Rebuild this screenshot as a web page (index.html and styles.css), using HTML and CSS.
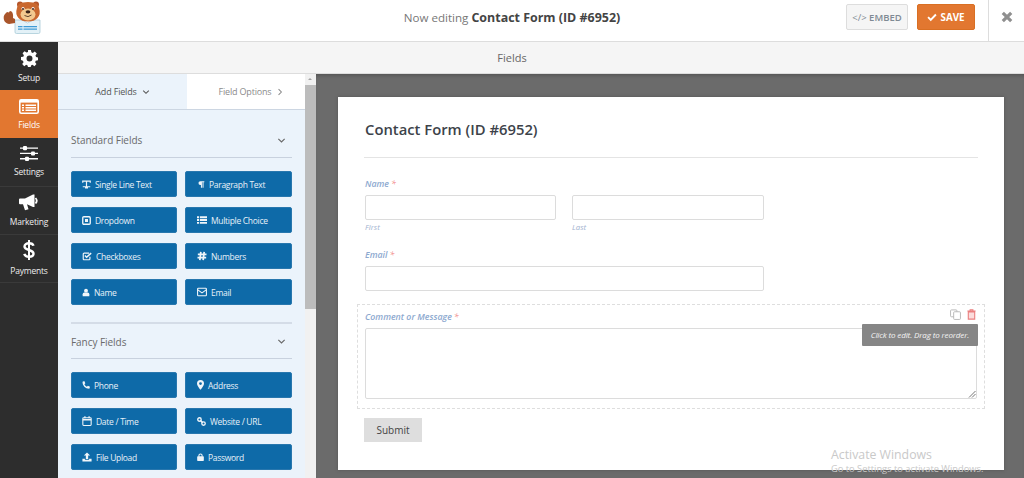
FILE: index.html
```html
<!DOCTYPE html>
<html lang="en">
<head>
<meta charset="utf-8">
<title>Now editing Contact Form</title>
<link rel="stylesheet" href="styles.css">
</head>
<body>
<svg class="defs" width="0" height="0">
  <defs>
    <symbol id="i-text" viewBox="0 0 12 12"><path d="M1 1.500h10M6 1.500v9M4 10.500h4M1 .5v3M11 .5v3M1 9h10" fill="none" stroke="currentColor" stroke-width="1.600"/></symbol>
    <symbol id="i-para" viewBox="0 0 12 12"><path d="M5 1h6v1.600h-1.200V11H8.300V2.600H7.400V11H5.900V6.600H5A2.800 2.800 0 0 1 5 1z" fill="currentColor"/></symbol>
    <symbol id="i-drop" viewBox="0 0 12 12"><rect x="1" y="1" width="10" height="10" rx="1.500" fill="none" stroke="currentColor" stroke-width="1.800"/><rect x="4" y="4" width="4" height="4" fill="currentColor"/></symbol>
    <symbol id="i-list" viewBox="0 0 12 12"><path d="M0 1.500h2.400v2.300H0zM3.400 1.500H12v2.300H3.400zM0 4.900h2.400v2.300H0zM3.400 4.900H12v2.300H3.400zM0 8.300h2.400v2.300H0zM3.400 8.300H12v2.300H3.400z" fill="currentColor"/></symbol>
    <symbol id="i-check" viewBox="0 0 12 12"><path d="M9.500 7v2.500a1 1 0 0 1-1 1h-6a1 1 0 0 1-1-1v-6a1 1 0 0 1 1-1h6" fill="none" stroke="currentColor" stroke-width="1.400"/><path d="M3.500 5.500l2 2L11 2.500" fill="none" stroke="currentColor" stroke-width="1.800"/></symbol>
    <symbol id="i-hash" viewBox="0 0 12 12"><path d="M4.600 1L3.400 11M8.600 1L7.400 11M1 4h10.400M.6 8h10.400" fill="none" stroke="currentColor" stroke-width="2.100"/></symbol>
    <symbol id="i-user" viewBox="0 0 12 12"><circle cx="6" cy="3.200" r="2.900" fill="currentColor"/><path d="M1 11.500V8.500Q1 6 3.500 6h5Q11 6 11 8.500v3z" fill="currentColor"/></symbol>
    <symbol id="i-mail" viewBox="0 0 12 12"><rect x=".7" y="1.500" width="10.600" height="9" rx="1" fill="none" stroke="currentColor" stroke-width="1.300"/><path d="M1 3.500l5 3.600 5-3.600" fill="none" stroke="currentColor" stroke-width="1.300"/></symbol>
    <symbol id="i-phone" viewBox="0 0 12 12"><path d="M3.400 0L.8 1C.6 6.500 5 11.500 11 11.500L12 8.800 8.800 7.300 7.400 8.800C5.800 8 4.200 6.400 3.600 4.900L5 3.500z" fill="currentColor"/></symbol>
    <symbol id="i-pin" viewBox="0 0 10 14"><path fill-rule="evenodd" d="M5 0a5 5 0 0 1 5 5C10 8.300 5 14 5 14S0 8.300 0 5A5 5 0 0 1 5 0zm0 3a2 2 0 1 0 0 4 2 2 0 0 0 0-4z" fill="currentColor"/></symbol>
    <symbol id="i-cal" viewBox="0 0 12 12"><rect x="1" y="2" width="10" height="9.300" rx="1" fill="none" stroke="currentColor" stroke-width="1.300"/><path d="M1 4.500h10" stroke="currentColor" stroke-width="1.800"/><path d="M3.500.2v2.500M8.500.2v2.500" stroke="currentColor" stroke-width="1.500"/></symbol>
    <symbol id="i-link" viewBox="0 0 12 12"><circle cx="3.300" cy="3.300" r="2.300" fill="none" stroke="currentColor" stroke-width="1.800"/><circle cx="8.700" cy="8.700" r="2.300" fill="none" stroke="currentColor" stroke-width="1.800"/><path d="M4.500 4.500l3 3" stroke="currentColor" stroke-width="2"/></symbol>
    <symbol id="i-upload" viewBox="0 0 12 12"><path d="M6 .5L9.800 4.300H7.400v4H4.600v-4H2.200z" fill="currentColor"/><path d="M.5 8h3v1.300h5V8h3v3.500H.5z" fill="currentColor"/></symbol>
    <symbol id="i-lock" viewBox="0 0 10 12"><path d="M2.600 5.500V3.800a2.400 2.400 0 0 1 4.800 0v1.700" fill="none" stroke="currentColor" stroke-width="1.600"/><rect x="0" y="5" width="10" height="7" rx="1" fill="currentColor"/></symbol>
    <symbol id="i-chev" viewBox="0 0 10 10"><path d="M1.500 3.200L5 6.700l3.500-3.500" fill="none" stroke="currentColor" stroke-width="1.300"/></symbol>
  </defs>
</svg>

<header class="topbar">
  <div class="logo">
    <svg viewBox="0 0 42 36" width="42" height="36">
      <path d="M15 20h25v12a1.500 1.500 0 0 1-1.500 1.500h-22A1.500 1.500 0 0 1 15 32z" fill="#e3f1f7" stroke="#a9cbd8" stroke-width=".8"/>
      <path d="M18 26h4.500v1.300H18zM18 28.500h4.500v1.300H18zM23.500 26H37v1.300H23.500zM23.500 28.500H37v1.300H23.500z" fill="#3f9bd6"/>
      <path d="M22 20l5.500 3 5.500-3-5.500-1.500z" fill="#fff" stroke="#a9cbd8" stroke-width=".7"/>
      <circle cx="20" cy="4.500" r="3" fill="#b4552a"/>
      <circle cx="36" cy="4.500" r="3" fill="#b4552a"/>
      <path d="M17 8q0-6 11-6t11 6q2 6-1.500 10-3 3.500-9.500 3.500T18.500 18Q15 14 17 8z" fill="#c9682f"/>
      <ellipse cx="28" cy="14.500" rx="7.500" ry="6" fill="#f3c98e"/>
      <circle cx="23" cy="8.500" r="1.500" fill="#fff"/>
      <circle cx="33" cy="8.500" r="1.500" fill="#fff"/>
      <circle cx="23" cy="9" r="1" fill="#3a2418"/>
      <circle cx="33" cy="9" r="1" fill="#3a2418"/>
      <ellipse cx="28" cy="11.800" rx="2.400" ry="1.600" fill="#3a2418"/>
      <path d="M24.500 15.500q3.500 2.500 7-.5" fill="none" stroke="#3a2418" stroke-width=".8"/>
      <path d="M5 14q-2 2-1 6 1 3 5 4l6-1v-4l-2-1q.5-5-1.500-6.500T9 12.500L7 12z" fill="#a9552b"/>
    </svg>
  </div>
  <h1 class="title">Now editing <strong>Contact Form (ID #6952)</strong></h1>
  <div class="actions">
    <button class="btn-embed"><span class="code">&lt;/&gt;</span> EMBED</button>
    <button class="btn-save">
      <svg viewBox="0 0 12 12" width="10" height="10"><path d="M1.300 6.200l3.200 3.200 6.200-6.400" fill="none" stroke="currentColor" stroke-width="2.300"/></svg>
      SAVE
    </button>
  </div>
  <div class="close">
    <svg viewBox="0 0 12 12" width="12" height="12"><path d="M1.800 1.800l8.400 8.400M10.200 1.800l-8.400 8.400" stroke="currentColor" stroke-width="3.200"/></svg>
  </div>
</header>

<div class="app">
  <nav class="sidenav">
    <a class="nav-item">
      <svg viewBox="0 0 20 20" width="17" height="17"><path fill-rule="evenodd" fill="currentColor" d="M8.300 0h3.400l.5 2.700 1.700.7L16.200 1.800l2.400 2.400-1.600 2.300.7 1.700 2.300.5v3.400l-2.700.5-.7 1.700 1.600 2.300-2.400 2.400-2.300-1.600-1.700.7-.5 2.700H8.300l-.5-2.700-1.700-.7-2.300 1.600-2.400-2.400 1.600-2.300-.7-1.700L0 11.700V8.300l2.700-.5.7-1.700L1.800 3.800l2.400-2.400 2.300 1.600 1.700-.7zM10 6.500a3.500 3.500 0 1 0 0 7 3.500 3.500 0 0 0 0-7z"/></svg>
      <span>Setup</span>
    </a>
    <a class="nav-item active">
      <svg viewBox="0 0 20 15" width="20" height="15"><rect x=".8" y=".8" width="18.400" height="13.400" rx="1.500" fill="none" stroke="currentColor" stroke-width="1.600"/><rect x=".8" y=".8" width="18.400" height="2.800" fill="currentColor"/><path d="M3 5.500h2v1.400H3zM6.500 5.500H17v1.400H6.500zM3 8h2v1.400H3zM6.500 8H17v1.400H6.500zM3 10.500h2v1.400H3zM6.500 10.500H17v1.400H6.500z" fill="currentColor"/></svg>
      <span>Fields</span>
    </a>
    <a class="nav-item">
      <svg viewBox="0 0 18 15" width="18" height="15"><path d="M0 1.500h18v1.300H0zM0 6.800h18v1.300H0zM0 12.100h18v1.300H0z" fill="currentColor"/><rect x="3" y="0" width="4" height="4.200" rx="1" fill="currentColor"/><rect x="11" y="5.400" width="4" height="4.200" rx="1" fill="currentColor"/><rect x="5" y="10.700" width="4" height="4.200" rx="1" fill="currentColor"/></svg>
      <span>Settings</span>
    </a>
    <a class="nav-item">
      <svg viewBox="0 0 20 18" width="20" height="18"><path d="M0 6.500q0-1 1-1h5L14 1.500h1.500V14H14L8 11.300l1.500 5-3.500 1-2-6H1q-1 0-1-1z" fill="currentColor"/><path d="M16.500 5q2.500 2.800 0 5.500" fill="none" stroke="currentColor" stroke-width="1.800"/></svg>
      <span>Marketing</span>
    </a>
    <a class="nav-item">
      <svg viewBox="0 0 12 20" width="12" height="20"><path d="M6 0v20" stroke="currentColor" stroke-width="2"/><path d="M10.500 5.800C10 4 8.500 3.300 6 3.300 3.300 3.300 1.500 4.500 1.500 6.500c0 4.300 9 2.700 9 7 0 2-1.800 3.200-4.500 3.200-2.700 0-4.200-1-4.700-2.800" fill="none" stroke="currentColor" stroke-width="2.400"/></svg>
      <span>Payments</span>
    </a>
  </nav>

  <main class="workspace">
    <div class="section-bar">Fields</div>
    <div class="panes">
      <aside class="panel">
        <div class="tabs">
          <div class="tab tab-add">Add Fields <svg class="chev" width="8" height="8"><use href="#i-chev"/></svg></div>
          <div class="tab tab-options">Field Options <svg class="chev chev-right" width="8" height="8"><use href="#i-chev"/></svg></div>
        </div>
        <div class="groups">
          <section class="group">
            <div class="group-head">Standard Fields <svg class="chev" width="9" height="9"><use href="#i-chev"/></svg></div>
            <div class="field-grid">
              <a class="field-btn"><svg width="9" height="9"><use href="#i-text"/></svg>Single Line Text</a>
              <a class="field-btn"><svg class="w8" width="8" height="9"><use href="#i-para"/></svg>Paragraph Text</a>
              <a class="field-btn"><svg width="9" height="9"><use href="#i-drop"/></svg>Dropdown</a>
              <a class="field-btn"><svg class="w10" width="10" height="10"><use href="#i-list"/></svg>Multiple Choice</a>
              <a class="field-btn"><svg class="w10" width="10" height="10"><use href="#i-check"/></svg>Checkboxes</a>
              <a class="field-btn"><svg class="w10" width="10" height="10"><use href="#i-hash"/></svg>Numbers</a>
              <a class="field-btn"><svg class="w8" width="8" height="9"><use href="#i-user"/></svg>Name</a>
              <a class="field-btn"><svg class="w10" width="10" height="10"><use href="#i-mail"/></svg>Email</a>
            </div>
          </section>
          <section class="group group-fancy">
            <div class="group-head">Fancy Fields <svg class="chev" width="9" height="9"><use href="#i-chev"/></svg></div>
            <div class="field-grid">
              <a class="field-btn"><svg class="w8" width="8" height="8"><use href="#i-phone"/></svg>Phone</a>
              <a class="field-btn"><svg class="w7" width="7" height="10"><use href="#i-pin"/></svg>Address</a>
              <a class="field-btn"><svg class="w10" width="10" height="10"><use href="#i-cal"/></svg>Date / Time</a>
              <a class="field-btn"><svg width="9" height="9"><use href="#i-link"/></svg>Website / URL</a>
              <a class="field-btn"><svg class="w10" width="10" height="10"><use href="#i-upload"/></svg>File Upload</a>
              <a class="field-btn"><svg class="w7" width="7" height="8"><use href="#i-lock"/></svg>Password</a>
            </div>
          </section>
        </div>
      </aside>
      <div class="scrollbar">
        <div class="arrow"></div>
        <div class="thumb"></div>
      </div>
      <section class="canvas">
        <div class="form-card">
          <h2 class="form-title">Contact Form (ID #6952)</h2>
          <div class="row row-name">
            <label class="lbl">Name<em>*</em></label>
            <div class="split">
              <div class="sub"><div class="input"></div><small>First</small></div>
              <div class="sub"><div class="input"></div><small>Last</small></div>
            </div>
          </div>
          <div class="row row-email">
            <label class="lbl">Email<em>*</em></label>
            <div class="input input-md"></div>
          </div>
          <div class="row-active">
            <div class="field-tools">
              <svg viewBox="0 0 12 12" width="11" height="11"><rect x=".6" y="1" width="7" height="7.500" rx="1" fill="none" stroke="#b5b5b5"/><rect x="4" y="3" width="7.400" height="8.400" rx="1" fill="#fff" stroke="#b5b5b5"/></svg>
              <svg viewBox="0 0 12 12" width="11" height="11"><path d="M2.500 3.200h7V11h-7zM1.500 2.200h9M4.500 2V.8h3V2" fill="#fbdcdc" stroke="#ea7f7f" stroke-width="1.200"/></svg>
            </div>
            <label class="lbl">Comment or Message<em>*</em></label>
            <div class="textarea">
              <svg class="grip" viewBox="0 0 8 8" width="8" height="8"><path d="M7.500 1L1 7.500M7.500 4L4 7.500" stroke="#777" stroke-width="1"/></svg>
            </div>
            <div class="tip">Click to edit. Drag to reorder.</div>
          </div>
          <button class="submit">Submit</button>
        </div>
        <div class="watermark">
          <div class="wm-main">Activate Windows</div>
          <div class="wm-sub">Go to Settings to activate Windows.</div>
        </div>
      </section>
    </div>
  </main>
</div>
</body>
</html>
```
FILE: styles.css
```css
* { box-sizing: border-box; }
html, body { margin: 0; height: 478px; overflow: hidden; }
body { font-family: "Open Sans", "Liberation Sans", sans-serif; background: #fff; color: #444; }
.defs { position: absolute; }
button { font-family: inherit; }

.topbar { height: 42px; display: flex; align-items: flex-start; background: #fff; border-bottom: 1px solid #ddd; }
.logo { width: 58px; height: 41px; overflow: hidden; }
.title { margin: 0; flex: 1; padding: 10px 0 0 120px; text-align: center; font-size: 11.600px; line-height: 16px; font-weight: 400; color: #777; }
.title strong { font-size: 12.450px; font-weight: 700; color: #444; }
.actions { display: flex; gap: 9px; padding: 4px 13px 0 0; align-items: center; }
.btn-embed { width: 62px; height: 26px; border: 1px solid #ddd; border-radius: 2px; background: #f5f5f5; color: #7f8a94; font-size: 9.500px; font-weight: 600; padding: 0; }
.btn-embed .code { font-weight: 400; }
.btn-save { width: 58px; height: 26px; border: 1px solid #d96f23; border-radius: 2px; background: #e27730; color: #fff; font-size: 9.800px; font-weight: 700; padding: 0; display: flex; align-items: center; justify-content: center; gap: 3px; }
.close { width: 36px; height: 41px; padding-bottom: 7px; border-left: 1px solid #ddd; color: #8f8f8f; display: flex; align-items: center; justify-content: center; }

.app { display: flex; height: 436px; }
.sidenav { width: 58px; background: #2d2d2d; flex: none; }
.nav-item { height: 48.200px; padding-top: 1px; display: flex; flex-direction: column; align-items: center; justify-content: center; gap: 5px; color: #fff; font-size: 8.500px; letter-spacing: -.2px; border-bottom: 1px solid #3a3a3a; }
.nav-item svg { display: block; }
.nav-item span { line-height: 12px; color: #eee; }
.nav-item:first-child { border-bottom: 0; }
.nav-item.active { background: #e27730; border-bottom: 0; }
.nav-item.active span { color: #fff; }

.workspace { flex: 1; display: flex; flex-direction: column; min-width: 0; }
.section-bar { height: 32px; flex: none; padding-right: 58px; background: #f5f5f5; border-bottom: 1px solid #ddd; text-align: center; font-size: 11px; line-height: 31px; color: #666; }
.panes { flex: 1; display: flex; min-height: 0; }

.panel { width: 247px; flex: none; background: #ebf3fb; overflow: hidden; }
.tabs { display: flex; height: 36px; border-bottom: 1px solid #ccd6e2; font-size: 9px; letter-spacing: -.18px; }
.tab { display: flex; align-items: center; justify-content: center; gap: 5px; }
.tab-add { width: 129px; color: #555; }
.tab-options { width: 118px; background: #fff; color: #8b8b8b; padding-left: 11px; }
.chev { color: currentColor; flex: none; }
.chev-right { transform: rotate(-90deg); }
.groups { padding: 0 13px; }
.group-head { height: 48px; display: flex; align-items: center; justify-content: space-between; padding: 24px 6px 11px 0; font-size: 10px; letter-spacing: -.05px; color: #6a6a6a; border-bottom: 1px solid #c8d1de; }
.field-grid { display: grid; grid-template-columns: 106px 107px; column-gap: 8px; row-gap: 10px; padding-top: 13px; }
.field-btn { height: 26px; display: flex; align-items: center; gap: 4px; padding: 0 0 0 10px; background: #0e6aa8; border-radius: 2px; border: 1px solid #2877ae; color: #e8f1f8; font-size: 8.500px; letter-spacing: -.3px; white-space: nowrap; }
.field-btn:nth-child(even) { padding-left: 11px; }
.field-btn svg { flex: none; color: #f0f5f9; }
.group-fancy { margin-top: 17px; border-top: 2px solid #d4dce7; }
.group-fancy .group-head { height: 35px; padding: 1px 6px 0 0; }

.scrollbar { width: 11px; flex: none; background: #f1f1f1; display: flex; flex-direction: column; }
.arrow { height: 11px; position: relative; }
.arrow::after { content: ""; position: absolute; left: 3px; top: 4px; border: 2.500px solid transparent; border-bottom-color: #a3a3a3; border-top: 0; }
.thumb { height: 224px; background: #bcbcbc; }

.canvas { flex: 1; background: #6b6b6b; padding: 23px 20px 0 22px; position: relative; overflow: hidden; box-shadow: inset 0 4px 4px -3px #4e4e4e; }
.form-card { height: 373px; background: #fff; padding: 0 26px; box-shadow: 0 0 3px #555; }
.form-title { margin: 0; height: 61px; padding: 21px 0 0 1px; font-size: 14.800px; line-height: 22px; font-weight: 600; color: #3d434a; border-bottom: 1px solid #e4e4e4; }
.lbl { display: block; font-size: 8.800px; line-height: 12px; font-weight: 600; font-style: italic; color: #8da9cf; }
.lbl em { color: #f28b8b; font-weight: 400; margin-left: 2px; }
.row { padding-left: 1px; }
.row-name { padding-top: 20px; }
.split { display: grid; grid-template-columns: 191px 192px; column-gap: 16px; width: 399px; margin-top: 5px; }
.input { height: 25px; border: 1px solid #dcdcdc; border-radius: 2px; background: #fff; }
.input-md { width: 399px; margin-top: 5px; }
.sub small { display: block; font-size: 7.800px; line-height: 12px; margin-top: 1px; font-style: italic; color: #9fb3d0; }
.row-email { padding-top: 16px; }
.row-active { position: relative; margin: 13px -7px 0; padding: 6px 7px 9px 7px; height: 105px; border: 1px dashed #dedede; }
.field-tools { position: absolute; right: 0; top: 4px; display: flex; gap: 5px; padding-right: 7px; }
.textarea { height: 71px; margin-top: 5px; border: 1px solid #dcdcdc; border-radius: 2px; background: #fff; position: relative; }
.grip { position: absolute; right: 0; bottom: 0; }
.tip { position: absolute; right: 6px; top: 19px; width: 116px; height: 22px; background: #868686; color: #f5f5f5; font-size: 8px; letter-spacing: -.12px; font-style: italic; line-height: 22px; text-align: center; border-radius: 1px; }
.submit { display: block; width: 58px; height: 24px; margin-top: 9px; border: 0; background: #dedede; color: #444; font-size: 10px; padding: 0; }

.watermark { position: absolute; left: 515px; top: 375px; color: #c9c9c9; line-height: 1; }
.wm-main { font-size: 12.300px; }
.wm-sub { font-size: 9.300px; margin-top: 3px; }
```
